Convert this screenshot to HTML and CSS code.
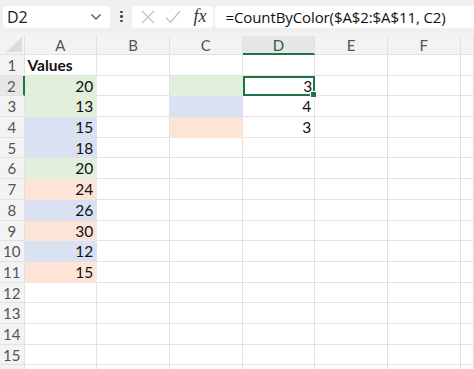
FILE: index.html
```html
<!DOCTYPE html>
<html lang="en">
<head>
  <meta charset="UTF-8" />
  <title>CountByColor</title>
  <link rel="stylesheet" href="styles.css">
</head>
<body>
  <div class="toolbar">
    <div class="namebox">
      <span>D2</span>
      <svg class="chevron" width="12" height="8" viewBox="0 0 12 8"><path d="M1.5 1.5 L6 6 L10.5 1.5" fill="none" stroke="#555" stroke-width="1.3"/></svg>
    </div>
    <div class="dots"><i></i><i></i><i></i></div>
    <div class="fxbox">
      <svg width="14" height="14" viewBox="0 0 14 14"><path d="M1 1 L13 13 M13 1 L1 13" stroke="#c4c4c4" stroke-width="1.2"/></svg>
      <svg width="16" height="14" viewBox="0 0 16 14"><path d="M1 7.5 L5.5 12.5 L15 1" fill="none" stroke="#c4c4c4" stroke-width="1.2"/></svg>
      <span class="fx">fx</span>
    </div>
    <div class="formula">=CountByColor($A$2:$A$11, C2)</div>
  </div>

  <div class="sheet">
    <div class="corner"></div>
    <div class="colhead">A</div><div class="colhead">B</div><div class="colhead">C</div>
    <div class="colhead active">D</div><div class="colhead">E</div><div class="colhead">F</div><div class="colhead"></div>

    <div class="rowhead">1</div>
    <div class="cell bold">Values</div><div class="cell"></div><div class="cell"></div><div class="cell"></div><div class="cell"></div><div class="cell"></div><div class="cell"></div>

    <div class="rowhead active">2</div>
    <div class="cell num green">20</div><div class="cell"></div><div class="cell green"></div><div class="cell num selected">3<span class="handle"></span></div><div class="cell"></div><div class="cell"></div><div class="cell"></div>

    <div class="rowhead">3</div>
    <div class="cell num green">13</div><div class="cell"></div><div class="cell blue"></div><div class="cell num">4</div><div class="cell"></div><div class="cell"></div><div class="cell"></div>

    <div class="rowhead">4</div>
    <div class="cell num blue">15</div><div class="cell"></div><div class="cell peach"></div><div class="cell num">3</div><div class="cell"></div><div class="cell"></div><div class="cell"></div>

    <div class="rowhead">5</div>
    <div class="cell num blue">18</div><div class="cell"></div><div class="cell"></div><div class="cell"></div><div class="cell"></div><div class="cell"></div><div class="cell"></div>

    <div class="rowhead">6</div>
    <div class="cell num green">20</div><div class="cell"></div><div class="cell"></div><div class="cell"></div><div class="cell"></div><div class="cell"></div><div class="cell"></div>

    <div class="rowhead">7</div>
    <div class="cell num peach">24</div><div class="cell"></div><div class="cell"></div><div class="cell"></div><div class="cell"></div><div class="cell"></div><div class="cell"></div>

    <div class="rowhead">8</div>
    <div class="cell num blue">26</div><div class="cell"></div><div class="cell"></div><div class="cell"></div><div class="cell"></div><div class="cell"></div><div class="cell"></div>

    <div class="rowhead">9</div>
    <div class="cell num peach">30</div><div class="cell"></div><div class="cell"></div><div class="cell"></div><div class="cell"></div><div class="cell"></div><div class="cell"></div>

    <div class="rowhead">10</div>
    <div class="cell num blue">12</div><div class="cell"></div><div class="cell"></div><div class="cell"></div><div class="cell"></div><div class="cell"></div><div class="cell"></div>

    <div class="rowhead">11</div>
    <div class="cell num peach">15</div><div class="cell"></div><div class="cell"></div><div class="cell"></div><div class="cell"></div><div class="cell"></div><div class="cell"></div>

    <div class="rowhead">12</div>
    <div class="cell"></div><div class="cell"></div><div class="cell"></div><div class="cell"></div><div class="cell"></div><div class="cell"></div><div class="cell"></div>

    <div class="rowhead">13</div>
    <div class="cell"></div><div class="cell"></div><div class="cell"></div><div class="cell"></div><div class="cell"></div><div class="cell"></div><div class="cell"></div>

    <div class="rowhead">14</div>
    <div class="cell"></div><div class="cell"></div><div class="cell"></div><div class="cell"></div><div class="cell"></div><div class="cell"></div><div class="cell"></div>

    <div class="rowhead">15</div>
    <div class="cell"></div><div class="cell"></div><div class="cell"></div><div class="cell"></div><div class="cell"></div><div class="cell"></div><div class="cell"></div>

    <div class="rowhead"></div>
    <div class="cell"></div><div class="cell"></div><div class="cell"></div><div class="cell"></div><div class="cell"></div><div class="cell"></div><div class="cell"></div>
  </div>
</body>
</html>
```

FILE: styles.css
```css
body {
  margin: 0;
  background: #f3f3f3;
  font-family: Lato, "Open Sans", sans-serif;
  overflow: hidden;
}
.toolbar {
  display: flex;
  align-items: center;
  height: 33px;
  padding: 0 0 0 3px;
  background: #f0f0f0;
}
.namebox {
  display: flex;
  align-items: center;
  justify-content: space-between;
  width: 107px;
  height: 22px;
  box-sizing: border-box;
  padding: 0 8px 0 4px;
  background: white;
  border-radius: 4px;
  font-family: "Open Sans", sans-serif;
  font-size: 16px;
  color: #222;
}
.dots {
  display: flex;
  flex-direction: column;
  gap: 2px;
  margin: 0 9px 0 10px;
}
.dots i {
  width: 2.5px;
  height: 2.5px;
  background: #444;
  border-radius: 50%;
}
.fxbox {
  display: flex;
  align-items: center;
  gap: 10px;
  width: 81px;
  height: 22px;
  box-sizing: border-box;
  padding: 0 6px 0 9px;
  background: white;
  border-radius: 4px;
}
.fx {
  margin-left: auto;
  font-family: "Liberation Serif", serif;
  font-style: italic;
  font-size: 18px;
  color: #333;
}
.formula {
  flex: 1;
  height: 22px;
  margin-left: 2px;
  padding-left: 11px;
  background: white;
  border-radius: 4px 0 0 4px;
  font-family: "Open Sans", sans-serif;
  font-size: 15px;
  line-height: 22px;
  letter-spacing: -0.1px;
  color: #111;
  white-space: nowrap;
}
.sheet {
  display: grid;
  grid-template-columns: 24.5px repeat(6, 72.7px) 1fr;
  grid-template-rows: 19px;
  grid-auto-rows: 20.7px;
  margin-top: 3px;
  background: white;
}
.sheet > div {
  box-sizing: border-box;
  border-right: 1px solid #e2e2e2;
  border-bottom: 1px solid #e2e2e2;
}
.corner {
  background: #f3f3f3;
  position: relative;
}
.corner::after {
  content: "";
  position: absolute;
  right: 2px;
  bottom: 2px;
  border-left: 16px solid transparent;
  border-bottom: 15px solid #dcdcdc;
}
.colhead {
  background: #f3f3f3;
  color: #555;
  font-size: 15px;
  text-align: center;
  line-height: 19px;
}
.colhead.active {
  background: #e6e6e6;
  border-bottom: 2px solid #217346 !important;
  color: #2a5e3d;
}
.rowhead {
  background: #f3f3f3;
  color: #555;
  font-size: 15px;
  text-align: center;
  line-height: 21px;
}
.rowhead.active {
  background: #e6e6e6;
  border-right: 2px solid #217346 !important;
}
.cell {
  font-size: 15.5px;
  color: #111;
  line-height: 21px;
  padding: 0 3px;
}
.bold {
  font-weight: bold;
}
.num {
  text-align: right;
}
.green {
  background: #e2efda;
  border-color: #e2efda !important;
}
.blue {
  background: #d9e1f2;
  border-color: #d9e1f2 !important;
}
.peach {
  background: #fce4d6;
  border-color: #fce4d6 !important;
}
.selected {
  position: relative;
  border: 2px solid #217346 !important;
  line-height: 17px;
  padding-right: 1px;
}
.handle {
  position: absolute;
  right: -4px;
  bottom: -4px;
  width: 5px;
  height: 5px;
  background: #217346;
  border: 1px solid white;
}
```
